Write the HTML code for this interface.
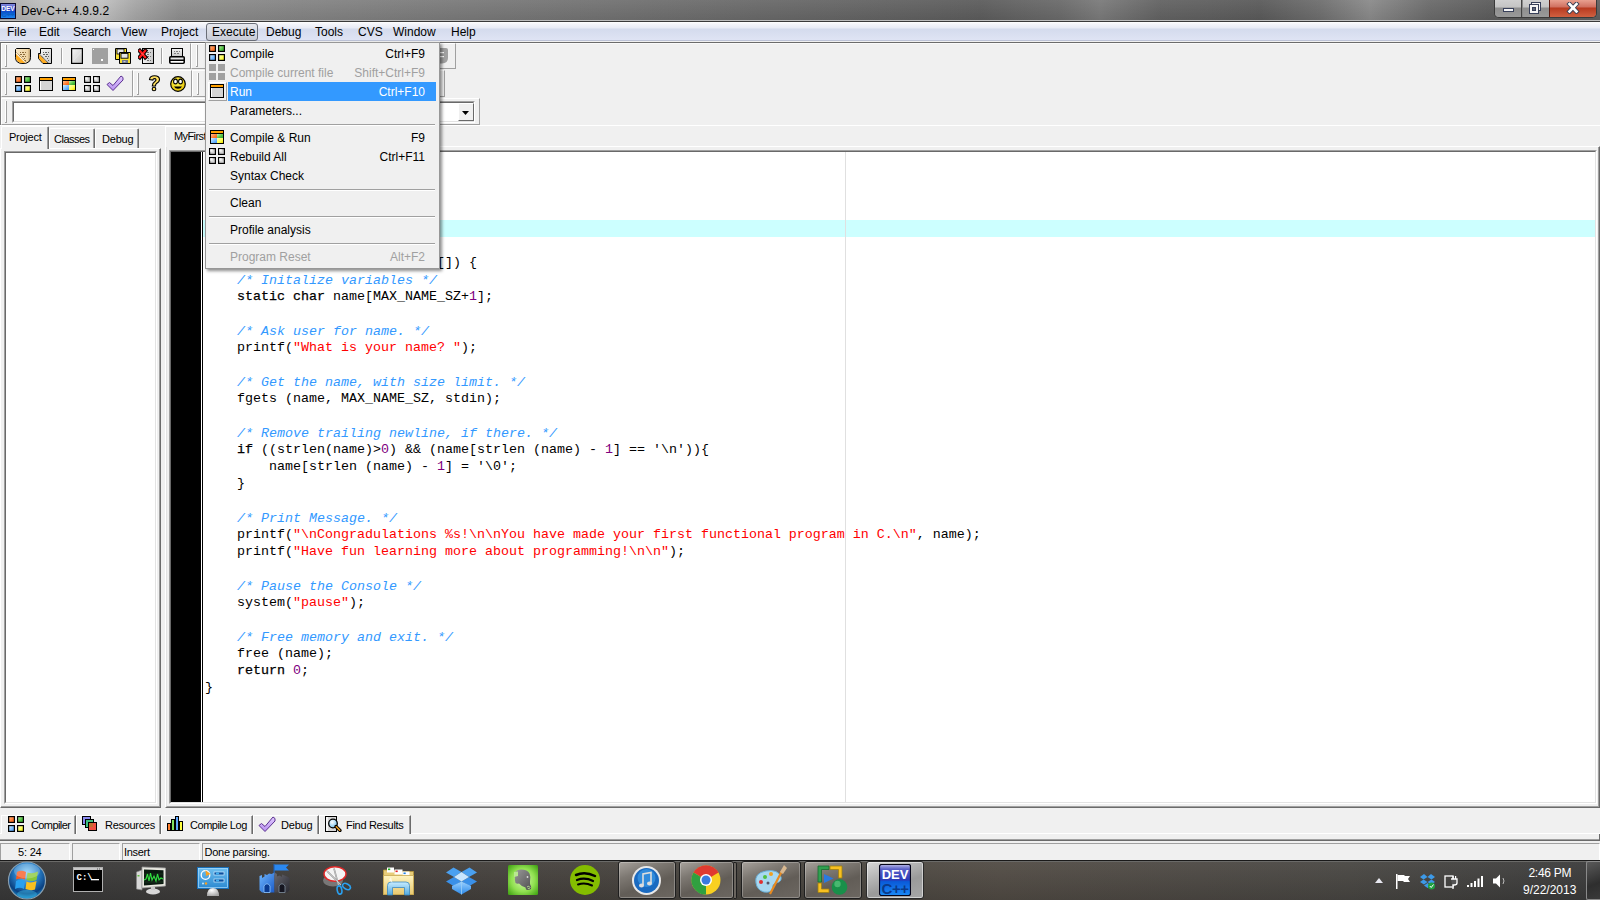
<!DOCTYPE html><html><head><meta charset="utf-8"><style>
*{margin:0;padding:0;box-sizing:border-box}
html,body{width:1600px;height:900px;overflow:hidden;background:#f0f0f0}
body{position:relative;font-family:"Liberation Sans",sans-serif;font-size:12px;color:#000}
div,span,svg{position:absolute}
.t{white-space:pre;line-height:14px}
.code{font-family:"Liberation Mono",monospace;font-size:13.33px;line-height:17px;white-space:pre}
.cm{color:#3399ff;font-style:italic}
.st{color:#ff0000}
.nm{color:#800080}
.kw{-webkit-text-stroke:0.25px #000}
</style></head><body>
<svg width="0" height="0" style="position:absolute"><defs><linearGradient id="gO" x1="0" y1="0" x2="1" y2="1"><stop offset="0" stop-color="#ffc090"/><stop offset="0.6" stop-color="#ff7a30"/><stop offset="1" stop-color="#f06010"/></linearGradient><linearGradient id="gG" x1="0" y1="0" x2="1" y2="1"><stop offset="0" stop-color="#c0f8b0"/><stop offset="0.6" stop-color="#50c040"/><stop offset="1" stop-color="#30a030"/></linearGradient><linearGradient id="gB" x1="0" y1="0" x2="1" y2="1"><stop offset="0" stop-color="#d8f0ff"/><stop offset="0.6" stop-color="#70b8ff"/><stop offset="1" stop-color="#4090f0"/></linearGradient><linearGradient id="gY" x1="0" y1="0" x2="1" y2="1"><stop offset="0" stop-color="#ffffc0"/><stop offset="0.6" stop-color="#ffff50"/><stop offset="1" stop-color="#e8d800"/></linearGradient></defs></svg><div style="left:0px;top:0px;width:1600px;height:20px;background:linear-gradient(90deg,#a8a8a8 0px,#bcbcbc 40px,#c2c2c2 100px,#a6a6a6 135px,#8e8e8e 180px,#848484 300px,#7c7c7c 420px,#747474 560px,#6c6c6c 700px,#646464 850px,#5c5c5c 980px,#6a6a6a 1060px,#7a7a7a 1100px,#626262 1160px,#5a5a5a 1260px,#6e6e6e 1320px,#8a8a8a 1370px,#6a6a6a 1430px,#5c5c5c 1490px,#606060 1600px)"></div><div style="left:0px;top:0px;width:1600px;height:20px;background:linear-gradient(rgba(255,255,255,0.06),rgba(0,0,0,0.06))"></div><div style="left:0px;top:20px;width:1600px;height:1px;background:#bdbdbd"></div><div style="left:0px;top:21px;width:1600px;height:1px;background:#3a3a3a"></div><svg style="position:absolute;left:0px;top:3px;" width="16" height="16" viewBox="0 0 16 16"><defs><linearGradient id="ai" x1="0" y1="0" x2="0" y2="1"><stop offset="0" stop-color="#8a90e0"/><stop offset="0.45" stop-color="#2a40c0"/><stop offset="0.55" stop-color="#0a50d0"/><stop offset="1" stop-color="#1a88f0"/></linearGradient></defs><rect x="0.5" y="0.5" width="15" height="15" fill="url(#ai)" stroke="#0a0a30"/><text x="8" y="7.5" text-anchor="middle" font-family="Liberation Sans" font-weight="bold" font-size="6.5" fill="#fff">DEV</text><text x="8" y="14" text-anchor="middle" font-family="Liberation Sans" font-weight="bold" font-size="7" fill="#0a60c0">C++</text></svg><div class="t" style="left:21px;top:4px">Dev-C++ 4.9.9.2</div><div style="left:1494px;top:0px;width:103px;height:18px;border:1px solid #3a3a3a;border-top:none;border-radius:0 0 5px 5px;background:#888"></div><div style="left:1495px;top:0px;width:27px;height:17px;background:linear-gradient(#d0d0d0 0,#c4c4c4 7px,#8e8e8e 8px,#9a9a9a 17px);border-right:1px solid #444;border-radius:0 0 0 4px"></div><div style="left:1523px;top:0px;width:26px;height:17px;background:linear-gradient(#d0d0d0 0,#c4c4c4 7px,#8e8e8e 8px,#9a9a9a 17px)"></div><div style="left:1549px;top:0px;width:47px;height:17px;background:linear-gradient(#e8a090 0,#d07060 7px,#b83a20 8px,#d06040 17px);border-left:1px solid #5a1a10;border-radius:0 0 4px 0"></div><div style="left:1503px;top:8px;width:11px;height:4px;background:#f4f4f4;border:1px solid #38405a"></div><svg style="position:absolute;left:1528px;top:1px;" width="14" height="14" viewBox="0 0 14 14"><rect x="3.5" y="1.5" width="9" height="8" fill="#f4f4f4" stroke="#38405a"/><rect x="1.5" y="3.5" width="9" height="9" fill="#f4f4f4" stroke="#38405a"/><rect x="4.5" y="6.5" width="3" height="3" fill="#606878" stroke="#38405a"/></svg><svg style="position:absolute;left:1566px;top:2px;" width="14" height="12" viewBox="0 0 14 12"><path d="M3.5 2 L10.5 9.5 M10.5 2 L3.5 9.5" stroke="#3a3f55" stroke-width="4.4" stroke-linecap="square"/><path d="M3.5 2 L10.5 9.5 M10.5 2 L3.5 9.5" stroke="#fff" stroke-width="2.6" stroke-linecap="square"/></svg><div style="left:0px;top:22px;width:1600px;height:19px;background:linear-gradient(#ffffff 0,#f4f5fa 2px,#e8ebf5 6px,#d4dbed 7px,#dfe4f4 18px)"></div><div style="left:0px;top:40px;width:1600px;height:1px;background:#bcc2d6"></div><div style="left:0px;top:41px;width:1600px;height:1px;background:#f0f0f0"></div><div style="left:0px;top:42px;width:1600px;height:1px;background:#6b6b6b"></div><div style="left:0px;top:43px;width:1600px;height:1px;background:#fafafa"></div><div style="left:206px;top:23px;width:52px;height:18px;border:1px solid #6a6e78;border-radius:3px;background:linear-gradient(#e6e8ee,#c8ccd8)"></div><div class="t" style="left:7px;top:25px">File</div><div class="t" style="left:39px;top:25px">Edit</div><div class="t" style="left:73px;top:25px">Search</div><div class="t" style="left:121px;top:25px">View</div><div class="t" style="left:161px;top:25px">Project</div><div class="t" style="left:212px;top:25px">Execute</div><div class="t" style="left:266px;top:25px">Debug</div><div class="t" style="left:315px;top:25px">Tools</div><div class="t" style="left:358px;top:25px">CVS</div><div class="t" style="left:393px;top:25px">Window</div><div class="t" style="left:451px;top:25px">Help</div><div style="left:0px;top:43px;width:1px;height:82px;background:#7a7a7a"></div><div style="left:1px;top:43px;width:190px;height:26px;border-top:1px solid #fff;border-left:1px solid #fff;border-right:1px solid #a0a0a0;border-bottom:1px solid #a0a0a0"></div><div style="left:191px;top:43px;width:265px;height:26px;border-top:1px solid #fff;border-left:1px solid #fff;border-right:1px solid #a0a0a0;border-bottom:1px solid #a0a0a0"></div><div style="left:1px;top:70px;width:132px;height:27px;border-top:1px solid #fff;border-left:1px solid #fff;border-right:1px solid #a0a0a0;border-bottom:1px solid #a0a0a0"></div><div style="left:133px;top:70px;width:59px;height:27px;border-top:1px solid #fff;border-left:1px solid #fff;border-right:1px solid #a0a0a0;border-bottom:1px solid #a0a0a0"></div><div style="left:192px;top:70px;width:253px;height:27px;border-top:1px solid #fff;border-left:1px solid #fff;border-right:1px solid #a0a0a0;border-bottom:1px solid #a0a0a0"></div><div style="left:1px;top:98px;width:479px;height:27px;border-top:1px solid #fff;border-left:1px solid #fff;border-right:1px solid #a0a0a0;border-bottom:1px solid #a0a0a0"></div><div style="left:0px;top:125px;width:1600px;height:1px;background:#fff"></div><div style="left:5px;top:45px;width:1px;height:22px;background:#ffffff"></div><div style="left:6px;top:45px;width:1px;height:22px;background:#a0a0a0"></div><div style="left:5px;top:66px;width:2px;height:1px;background:#a0a0a0"></div><div style="left:196px;top:45px;width:1px;height:22px;background:#ffffff"></div><div style="left:197px;top:45px;width:1px;height:22px;background:#a0a0a0"></div><div style="left:196px;top:66px;width:2px;height:1px;background:#a0a0a0"></div><div style="left:5px;top:73px;width:1px;height:22px;background:#ffffff"></div><div style="left:6px;top:73px;width:1px;height:22px;background:#a0a0a0"></div><div style="left:5px;top:94px;width:2px;height:1px;background:#a0a0a0"></div><div style="left:137px;top:73px;width:1px;height:22px;background:#ffffff"></div><div style="left:138px;top:73px;width:1px;height:22px;background:#a0a0a0"></div><div style="left:137px;top:94px;width:2px;height:1px;background:#a0a0a0"></div><div style="left:197px;top:73px;width:1px;height:22px;background:#ffffff"></div><div style="left:198px;top:73px;width:1px;height:22px;background:#a0a0a0"></div><div style="left:197px;top:94px;width:2px;height:1px;background:#a0a0a0"></div><div style="left:5px;top:101px;width:1px;height:22px;background:#ffffff"></div><div style="left:6px;top:101px;width:1px;height:22px;background:#a0a0a0"></div><div style="left:5px;top:122px;width:2px;height:1px;background:#a0a0a0"></div><svg style="position:absolute;left:436px;top:48px;" width="13" height="16" viewBox="0 0 13 16"><path d="M0 0 H10 Q12 0 12 2 V10 Q12 15 6 15.5 H0Z" fill="#a0a0a0"/><rect x="3" y="4" width="5" height="1.2" fill="#fff"/><rect x="3" y="8" width="5" height="1.2" fill="#fff"/></svg><div style="left:61px;top:48px;width:1px;height:16px;background:#a0a0a0"></div><div style="left:62px;top:48px;width:1px;height:16px;background:#ffffff"></div><div style="left:161px;top:48px;width:1px;height:16px;background:#a0a0a0"></div><div style="left:162px;top:48px;width:1px;height:16px;background:#ffffff"></div><svg style="position:absolute;left:15px;top:48px;" width="16" height="16" viewBox="0 0 16 16"><defs><linearGradient id="np" x1="0" y1="0" x2="1" y2="0"><stop offset="0" stop-color="#f8e8c8"/><stop offset="0.8" stop-color="#eed4a4"/><stop offset="1" stop-color="#b09060"/></linearGradient></defs><path d="M1.5 0.5 H14.5 L15.5 1.5 V9.5 Q15.5 15.5 8 15.5 Q0.5 15.5 0.5 9.5 V1.5Z" fill="url(#np)" stroke="#000"/><path d="M1 6 L10.5 15 H8 Q2 15 1 10Z" fill="#ffac20"/><path d="M1 5.2 L10.6 14.8" stroke="#fff" stroke-width="0.8"/><path d="M1.5 4.6 L11.2 14.3" stroke="#7a5010" stroke-width="0.9" stroke-dasharray="1 0.8"/><g fill="#8a6a3a"><rect x="5" y="4" width="1" height="1"/><rect x="7" y="4" width="2" height="1"/><rect x="10" y="4" width="1" height="1"/><rect x="5" y="6" width="2" height="1"/><rect x="8" y="6" width="2" height="1"/><rect x="7" y="8" width="2" height="1"/><rect x="10" y="8" width="1" height="1"/><rect x="9" y="10" width="1" height="1"/><rect x="10" y="12" width="1" height="1"/></g></svg><svg style="position:absolute;left:38px;top:48px;" width="14" height="16" viewBox="0 0 14 16"><defs><linearGradient id="op" x1="0" y1="0" x2="1" y2="1"><stop offset="0" stop-color="#fafafa"/><stop offset="1" stop-color="#c8c8c8"/></linearGradient></defs><path d="M2.5 0.5 H13.5 V15.5 H5 L0.5 10.5 V5.5 H2.5 Z" fill="url(#op)" stroke="#000"/><path d="M0.8 6 L9.5 15 H5 L1 10.8Z" fill="#ffac20"/><path d="M1 5.6 L10 14.8" stroke="#000" stroke-width="1" stroke-dasharray="1 0.7"/><g fill="#606060"><rect x="5" y="4" width="1" height="1"/><rect x="7" y="4" width="2" height="1"/><rect x="10" y="4" width="1" height="1"/><rect x="5" y="6" width="2" height="1"/><rect x="8" y="6" width="2" height="1"/><rect x="7" y="8" width="2" height="1"/><rect x="10" y="8" width="1" height="1"/><rect x="9" y="10" width="1" height="1"/><rect x="10" y="12" width="1" height="1"/></g></svg><svg style="position:absolute;left:71px;top:48px;" width="12" height="16" viewBox="0 0 12 16"><defs><linearGradient id="nf" x1="0" y1="0" x2="1" y2="1"><stop offset="0" stop-color="#f8f8f8"/><stop offset="1" stop-color="#c4c4c4"/></linearGradient></defs><rect x="0.6" y="0.6" width="10.8" height="14.8" fill="url(#nf)" stroke="#000" stroke-width="1.2"/><path d="M2 13 L10 4" stroke="#e8e8e8" stroke-width="0.8"/></svg><div style="left:92px;top:48px;width:16px;height:16px;background:#a0a0a0"></div><div style="left:93px;top:49px;width:1px;height:1px;background:#fff"></div><div style="left:101px;top:59px;width:2px;height:2px;background:#fff"></div><svg style="position:absolute;left:115px;top:48px;" width="16" height="16" viewBox="0 0 16 16"><path d="M0.5 0.5 H11.5 V11.5 H0.5Z" fill="#f8e030" stroke="#000"/><rect x="2" y="1" width="7" height="5" fill="#e8e8e8" stroke="#000" stroke-width="0.8"/><rect x="10" y="1.5" width="1" height="1" fill="#ffe800"/><path d="M4.5 4.5 H15.5 V15.5 H4.5Z" fill="#f8e030" stroke="#000"/><rect x="6" y="5.4" width="7" height="4.8" fill="#e4e4e4" stroke="#000" stroke-width="0.9"/><rect x="14" y="5.5" width="1" height="1" fill="#ffe800"/><rect x="7" y="12" width="6" height="3" fill="#707890"/><rect x="8.5" y="13" width="2" height="1.2" fill="#ccc"/></svg><svg style="position:absolute;left:138px;top:48px;" width="16" height="16" viewBox="0 0 16 16"><defs><linearGradient id="cp" x1="0" y1="0" x2="1" y2="0"><stop offset="0" stop-color="#f4f4f4"/><stop offset="1" stop-color="#c8c8c8"/></linearGradient></defs><rect x="4.5" y="0.5" width="11" height="15" fill="url(#cp)" stroke="#000"/><g fill="#707070"><rect x="9" y="4" width="2" height="1"/><rect x="12" y="4" width="1" height="1"/><rect x="9" y="6" width="2" height="1"/><rect x="9" y="8" width="2" height="1"/><rect x="12" y="8" width="1" height="1"/><rect x="10" y="10" width="1" height="1"/><rect x="9" y="12" width="2" height="1"/><rect x="12" y="12" width="1" height="1"/></g><path d="M1.8 2.8 L7.2 9.2 M7.2 2.8 L1.8 9.2" stroke="#000" stroke-width="4.2" stroke-linecap="square"/><path d="M1.8 2.8 L7.2 9.2 M7.2 2.8 L1.8 9.2" stroke="#ff1a1a" stroke-width="2.2" stroke-linecap="square"/><path d="M3.5 5 L5.5 7" stroke="#ff9090" stroke-width="0.8"/></svg><svg style="position:absolute;left:169px;top:48px;" width="16" height="16" viewBox="0 0 16 16"><defs><linearGradient id="pr" x1="0" y1="0" x2="0" y2="1"><stop offset="0" stop-color="#f4f4f4"/><stop offset="1" stop-color="#c8c8c8"/></linearGradient></defs><rect x="2.5" y="0.5" width="11" height="8" fill="url(#pr)" stroke="#000"/><g fill="#808080"><rect x="5" y="3" width="1" height="1"/><rect x="7" y="3" width="2" height="1"/><rect x="10" y="3" width="1" height="1"/><rect x="5" y="5" width="2" height="1"/><rect x="8" y="5" width="2" height="1"/></g><rect x="0.75" y="8.75" width="14.5" height="6.5" rx="1" fill="#e4e4e4" stroke="#000" stroke-width="1.5"/><rect x="1" y="11.5" width="14" height="1.5" fill="#000"/><rect x="2" y="13" width="12" height="1.5" fill="#fff"/></svg><svg style="position:absolute;left:15px;top:76px" width="16" height="16"><rect x="0.6" y="0.6" width="5.8" height="5.8" fill="url(#gO)" stroke="#000" stroke-width="1.2"/><rect x="9.6" y="0.6" width="5.8" height="5.8" fill="url(#gG)" stroke="#000" stroke-width="1.2"/><rect x="0.6" y="9.6" width="5.8" height="5.8" fill="url(#gB)" stroke="#000" stroke-width="1.2"/><rect x="9.6" y="9.6" width="5.8" height="5.8" fill="url(#gY)" stroke="#000" stroke-width="1.2"/></svg><svg style="position:absolute;left:39px;top:77px" width="14" height="14"><rect x="0.5" y="0.5" width="13" height="13" fill="#d8d8d8" stroke="#000"/><rect x="1" y="1" width="12" height="2" fill="#ffa000"/><rect x="1" y="3" width="12" height="1" fill="#000"/><rect x="1" y="4" width="12" height="9" fill="#d4d4d4"/><rect x="1" y="4" width="1" height="9" fill="#fff"/></svg><svg style="position:absolute;left:62px;top:77px" width="14" height="14"><rect x="0.5" y="0.5" width="13" height="13" fill="#d8d8d8" stroke="#000"/><rect x="1" y="1" width="12" height="2" fill="#ffa000"/><rect x="1" y="3" width="12" height="1" fill="#000"/><rect x="1" y="4" width="6" height="4" fill="url(#gO)"/><rect x="7" y="4" width="6" height="4" fill="url(#gG)"/><rect x="1" y="8" width="6" height="5" fill="url(#gB)"/><rect x="7" y="8" width="6" height="5" fill="url(#gY)"/></svg><svg style="position:absolute;left:84px;top:76px" width="16" height="16"><rect x="0.6" y="0.6" width="5.8" height="5.8" fill="#d4d4d4" stroke="#000" stroke-width="1.2"/><rect x="1.2" y="1.2" width="2.5" height="2.5" fill="#f4f4f4"/><rect x="9.6" y="0.6" width="5.8" height="5.8" fill="#d4d4d4" stroke="#000" stroke-width="1.2"/><rect x="10.2" y="1.2" width="2.5" height="2.5" fill="#f4f4f4"/><rect x="0.6" y="9.6" width="5.8" height="5.8" fill="#d4d4d4" stroke="#000" stroke-width="1.2"/><rect x="1.2" y="10.2" width="2.5" height="2.5" fill="#f4f4f4"/><rect x="9.6" y="9.6" width="5.8" height="5.8" fill="#d4d4d4" stroke="#000" stroke-width="1.2"/><rect x="10.2" y="10.2" width="2.5" height="2.5" fill="#f4f4f4"/></svg><svg style="position:absolute;left:106px;top:75px" width="18" height="17" viewBox="0 0 18 17"><defs><linearGradient id="ck" x1="0" y1="0" x2="0" y2="1"><stop offset="0" stop-color="#e0c8ff"/><stop offset="1" stop-color="#b890f0"/></linearGradient></defs><path d="M1 9.5 L3.5 7.5 L7 10.5 L15 1 L17 2.5 V5 L7 15.5 Z" fill="url(#ck)" stroke="#5a3090" stroke-width="1" stroke-linejoin="round"/></svg><svg style="position:absolute;left:148px;top:75px;" width="13" height="17" viewBox="0 0 13 17"><path d="M1.5 4.5 Q2 0.8 6.5 0.8 Q11.5 0.8 11.5 4.5 Q11.5 7 8.5 8.5 Q7.5 9.2 7.5 11 H4.3 Q4.3 8 6.8 6.5 Q8.2 5.6 8 4.5 Q7.8 3.6 6.5 3.6 Q5 3.6 4.8 5 Z" fill="#ffe060" stroke="#000" stroke-width="1.1"/><circle cx="6" cy="14" r="1.8" fill="#ffe060" stroke="#000" stroke-width="1.1"/></svg><svg style="position:absolute;left:170px;top:76px;" width="16" height="16" viewBox="0 0 16 16"><defs><radialGradient id="sm" cx="45%" cy="40%" r="60%"><stop offset="0" stop-color="#ffff60"/><stop offset="1" stop-color="#e8c000"/></radialGradient></defs><circle cx="8" cy="8" r="7.3" fill="url(#sm)" stroke="#000" stroke-width="1.2"/><ellipse cx="5.5" cy="5.5" rx="1.9" ry="2.4" fill="#fff" stroke="#000" stroke-width="1.1"/><ellipse cx="10.5" cy="5.5" rx="1.9" ry="2.4" fill="#fff" stroke="#000" stroke-width="1.1"/><path d="M4 10.5 H12 Q11 12.8 8 12.8 Q5 12.8 4 10.5Z" fill="#000"/></svg><div style="left:12px;top:101px;width:463px;height:22px;background:#fff;border-top:1px solid #a0a0a0;border-left:1px solid #a0a0a0;border-right:1px solid #fff;border-bottom:1px solid #fff"></div><div style="left:13px;top:102px;width:461px;height:20px;border-top:1px solid #696969;border-left:1px solid #696969;border-right:1px solid #e3e3e3;border-bottom:1px solid #e3e3e3"></div><div style="left:458px;top:103px;width:16px;height:18px;background:#f0f0f0;border-top:1px solid #fff;border-left:1px solid #fff;border-right:1px solid #696969;border-bottom:1px solid #696969"></div><svg style="position:absolute;left:462px;top:110.5px;" width="7" height="4" viewBox="0 0 7 4"><path d="M0 0 H7 L3.5 4Z" fill="#000"/></svg><div style="left:0px;top:126px;width:1px;height:682px;background:#f0f0f0"></div><div style="left:0px;top:148px;width:161px;height:660px;border-top:1px solid #fff;border-left:1px solid #fff;border-right:1px solid #6b6b6b;border-bottom:1px solid #6b6b6b"></div><div style="left:1px;top:149px;width:159px;height:658px;border-right:1px solid #a0a0a0;border-bottom:1px solid #a0a0a0"></div><div style="left:4px;top:151px;width:153px;height:653px;background:#fff;border-top:1px solid #a0a0a0;border-left:1px solid #a0a0a0;border-right:1px solid #fff;border-bottom:1px solid #fff"></div><div style="left:5px;top:152px;width:151px;height:651px;border-top:1px solid #696969;border-left:1px solid #696969;border-right:1px solid #e3e3e3;border-bottom:1px solid #e3e3e3"></div><div style="left:49px;top:128px;width:46px;height:20px;background:#f0f0f0;border-top:1px solid #fff;border-left:1px solid #fff;border-right:1px solid #6b6b6b;border-radius:2px 2px 0 0"></div><div style="left:93px;top:129px;width:1px;height:19px;background:#a0a0a0"></div><div style="left:95px;top:128px;width:44px;height:20px;background:#f0f0f0;border-top:1px solid #fff;border-left:1px solid #fff;border-right:1px solid #6b6b6b;border-radius:2px 2px 0 0"></div><div style="left:137px;top:129px;width:1px;height:19px;background:#a0a0a0"></div><div style="left:1px;top:126px;width:48px;height:23px;background:#f0f0f0;border-top:1px solid #fff;border-left:1px solid #fff;border-right:1px solid #6b6b6b;border-radius:2px 2px 0 0"></div><div style="left:47px;top:127px;width:1px;height:22px;background:#a0a0a0"></div><div class="t" style="left:9px;top:130px;font-size:11px;letter-spacing:-0.25px">Project</div><div class="t" style="left:54px;top:132px;font-size:11px;letter-spacing:-0.5px">Classes</div><div class="t" style="left:102px;top:132px;font-size:11px;letter-spacing:-0.2px">Debug</div><div style="left:165px;top:146px;width:1435px;height:662px;border-top:1px solid #fff;border-left:1px solid #fff;border-right:1px solid #6b6b6b;border-bottom:1px solid #6b6b6b"></div><div style="left:166px;top:147px;width:1433px;height:660px;border-left:1px solid #e3e3e3;border-right:1px solid #a0a0a0;border-bottom:1px solid #a0a0a0"></div><div style="left:165px;top:126px;width:80px;height:21px;background:#f0f0f0;border-top:1px solid #fff;border-left:1px solid #fff;border-right:1px solid #6b6b6b"></div><div class="t" style="left:174px;top:129px;font-size:11px;letter-spacing:-0.6px">MyFirstProgram.c</div><div style="left:169px;top:150px;width:1428px;height:654px;background:#fff;border-top:1px solid #a0a0a0;border-left:1px solid #a0a0a0;border-right:1px solid #fff;border-bottom:1px solid #fff"></div><div style="left:170px;top:151px;width:1426px;height:652px;border-top:1px solid #696969;border-left:1px solid #696969;border-right:1px solid #e3e3e3;border-bottom:1px solid #e3e3e3"></div><div style="left:171px;top:152px;width:30px;height:650px;background:#000"></div><div style="left:202px;top:152px;width:1px;height:650px;background:#000"></div><div style="left:203px;top:220px;width:1392px;height:17px;background:#ccffff"></div><div style="left:845px;top:152px;width:1px;height:650px;background:#e0e0e0"></div><div class="code" style="left:205px;top:254px">int main(int argc, char *argv[]) {</div><div class="code" style="left:205px;top:272px">    <span class="cm" style="position:static">/* Initalize variables */</span></div><div class="code" style="left:205px;top:288px">    <span class="kw" style="position:static">static</span> <span class="kw" style="position:static">char</span> name[MAX_NAME_SZ+<span class="nm" style="position:static">1</span>];</div><div class="code" style="left:205px;top:323px">    <span class="cm" style="position:static">/* Ask user for name. */</span></div><div class="code" style="left:205px;top:339px">    printf(<span class="st" style="position:static">"What is your name? "</span>);</div><div class="code" style="left:205px;top:374px">    <span class="cm" style="position:static">/* Get the name, with size limit. */</span></div><div class="code" style="left:205px;top:390px">    fgets (name, MAX_NAME_SZ, stdin);</div><div class="code" style="left:205px;top:425px">    <span class="cm" style="position:static">/* Remove trailing newline, if there. */</span></div><div class="code" style="left:205px;top:441px">    <span class="kw" style="position:static">if</span> ((strlen(name)&gt;<span class="nm" style="position:static">0</span>) &amp;&amp; (name[strlen (name) - <span class="nm" style="position:static">1</span>] == '\n')){</div><div class="code" style="left:205px;top:458px">        name[strlen (name) - <span class="nm" style="position:static">1</span>] = '\0';</div><div class="code" style="left:205px;top:475px">    }</div><div class="code" style="left:205px;top:510px">    <span class="cm" style="position:static">/* Print Message. */</span></div><div class="code" style="left:205px;top:526px">    printf(<span class="st" style="position:static">"\nCongradulations %s!\n\nYou have made your first functional program in C.\n"</span>, name);</div><div class="code" style="left:205px;top:543px">    printf(<span class="st" style="position:static">"Have fun learning more about programming!\n\n"</span>);</div><div class="code" style="left:205px;top:578px">    <span class="cm" style="position:static">/* Pause the Console */</span></div><div class="code" style="left:205px;top:594px">    system(<span class="st" style="position:static">"pause"</span>);</div><div class="code" style="left:205px;top:629px">    <span class="cm" style="position:static">/* Free memory and exit. */</span></div><div class="code" style="left:205px;top:645px">    free (name);</div><div class="code" style="left:205px;top:662px">    <span class="kw" style="position:static">return</span> <span class="nm" style="position:static">0</span>;</div><div class="code" style="left:205px;top:679px">}</div><div style="left:0px;top:833px;width:1600px;height:1px;background:#fff"></div><div style="left:0px;top:834px;width:1600px;height:5px;background:#f0f0f0"></div><div style="left:0px;top:839px;width:1600px;height:1px;background:#a0a0a0"></div><div style="left:0px;top:840px;width:1600px;height:1px;background:#6b6b6b"></div><div style="left:1px;top:815px;width:75px;height:19px;background:#f0f0f0;border-top:1px solid #fff;border-left:1px solid #fff;border-right:1px solid #6b6b6b"></div><div style="left:74px;top:816px;width:1px;height:18px;background:#a0a0a0"></div><div style="left:76px;top:815px;width:85px;height:19px;background:#f0f0f0;border-top:1px solid #fff;border-left:1px solid #fff;border-right:1px solid #6b6b6b"></div><div style="left:159px;top:816px;width:1px;height:18px;background:#a0a0a0"></div><div style="left:161px;top:815px;width:92px;height:19px;background:#f0f0f0;border-top:1px solid #fff;border-left:1px solid #fff;border-right:1px solid #6b6b6b"></div><div style="left:251px;top:816px;width:1px;height:18px;background:#a0a0a0"></div><div style="left:253px;top:815px;width:66px;height:19px;background:#f0f0f0;border-top:1px solid #fff;border-left:1px solid #fff;border-right:1px solid #6b6b6b"></div><div style="left:317px;top:816px;width:1px;height:18px;background:#a0a0a0"></div><div style="left:319px;top:815px;width:92px;height:19px;background:#f0f0f0;border-top:1px solid #fff;border-left:1px solid #fff;border-right:1px solid #6b6b6b"></div><div style="left:409px;top:816px;width:1px;height:18px;background:#a0a0a0"></div><svg style="position:absolute;left:8px;top:816px" width="16" height="16"><rect x="0.6" y="0.6" width="5.8" height="5.8" fill="url(#gO)" stroke="#000" stroke-width="1.2"/><rect x="9.6" y="0.6" width="5.8" height="5.8" fill="url(#gG)" stroke="#000" stroke-width="1.2"/><rect x="0.6" y="9.6" width="5.8" height="5.8" fill="url(#gB)" stroke="#000" stroke-width="1.2"/><rect x="9.6" y="9.6" width="5.8" height="5.8" fill="url(#gY)" stroke="#000" stroke-width="1.2"/></svg><svg style="position:absolute;left:82px;top:816px;" width="16" height="16" viewBox="0 0 16 16"><rect x="0.5" y="0.5" width="8" height="8" fill="#8a8af0" stroke="#000"/><rect x="3.5" y="3.5" width="8" height="8" fill="#40c080" stroke="#000"/><rect x="6.5" y="6.5" width="8" height="8" fill="#f05040" stroke="#000"/><rect x="7" y="7" width="4" height="4" fill="#c07030"/></svg><svg style="position:absolute;left:167px;top:816px;" width="16" height="16" viewBox="0 0 16 16"><rect x="0.5" y="7.5" width="3" height="7" fill="#ff8030" stroke="#000"/><rect x="4.5" y="3.5" width="3" height="11" fill="#80e060" stroke="#000"/><rect x="8.5" y="0.5" width="3" height="14" fill="#60a8ff" stroke="#000"/><rect x="12.5" y="5.5" width="3" height="9" fill="#ffff40" stroke="#000"/></svg><svg style="position:absolute;left:258px;top:816px" width="18" height="17" viewBox="0 0 18 17"><defs><linearGradient id="ck" x1="0" y1="0" x2="0" y2="1"><stop offset="0" stop-color="#e0c8ff"/><stop offset="1" stop-color="#b890f0"/></linearGradient></defs><path d="M1 9.5 L3.5 7.5 L7 10.5 L15 1 L17 2.5 V5 L7 15.5 Z" fill="url(#ck)" stroke="#5a3090" stroke-width="1" stroke-linejoin="round"/></svg><svg style="position:absolute;left:325px;top:816px;" width="17" height="16" viewBox="0 0 17 16"><defs><radialGradient id="lens" cx="40%" cy="35%" r="60%"><stop offset="0" stop-color="#ffffff"/><stop offset="1" stop-color="#80c8f0"/></radialGradient></defs><rect x="0.5" y="0.5" width="11" height="15" fill="#d8d8d8" stroke="#000"/><rect x="1" y="1" width="2" height="14" fill="#f4f4f4"/><circle cx="8" cy="7.5" r="4.3" fill="url(#lens)" stroke="#000" stroke-width="1.3"/><path d="M11 10.5 L15 14.5" stroke="#000" stroke-width="3.2" stroke-linecap="round"/><path d="M11.3 10.8 L14.7 14.2" stroke="#f0a020" stroke-width="1.6" stroke-linecap="round"/></svg><div class="t" style="left:31px;top:818px;font-size:11px;letter-spacing:-0.6px">Compiler</div><div class="t" style="left:105px;top:818px;font-size:11px;letter-spacing:-0.3px">Resources</div><div class="t" style="left:190px;top:818px;font-size:11px;letter-spacing:-0.45px">Compile Log</div><div class="t" style="left:281px;top:818px;font-size:11px;letter-spacing:-0.2px">Debug</div><div class="t" style="left:346px;top:818px;font-size:11px;letter-spacing:-0.3px">Find Results</div><div style="left:1599px;top:834px;width:1px;height:6px;background:#6b6b6b"></div><div style="left:0px;top:841px;width:1600px;height:19px;background:#f0f0f0"></div><div style="left:0px;top:843px;width:70px;height:17px;border-top:1px solid #a0a0a0;border-left:1px solid #a0a0a0;border-right:1px solid #fff"></div><div style="left:72px;top:843px;width:48px;height:17px;border-top:1px solid #a0a0a0;border-left:1px solid #a0a0a0;border-right:1px solid #fff"></div><div style="left:122px;top:843px;width:78px;height:17px;border-top:1px solid #a0a0a0;border-left:1px solid #a0a0a0;border-right:1px solid #fff"></div><div style="left:202px;top:843px;width:1398px;height:17px;border-top:1px solid #a0a0a0;border-left:1px solid #a0a0a0;border-right:1px solid #fff"></div><div class="t" style="left:18px;top:845px;font-size:11px;letter-spacing:-0.2px">5: 24</div><div class="t" style="left:124px;top:845px;font-size:11px;letter-spacing:-0.3px">Insert</div><div class="t" style="left:204.5px;top:845px;font-size:11px;letter-spacing:-0.25px">Done parsing.</div><div style="left:0px;top:860px;width:1600px;height:40px;background:linear-gradient(90deg,#3a3a3a 0,#403e3c 250px,#46423e 500px,#4a4640 800px,#534d46 1000px,#4e4a45 1200px,#4a4844 1350px,#3c3c3c 1600px)"></div><div style="left:0px;top:862px;width:1600px;height:38px;background:linear-gradient(rgba(255,255,255,0.04),rgba(0,0,0,0.12))"></div><div style="left:0px;top:860px;width:1600px;height:1px;background:#1a1a1a"></div><div style="left:0px;top:861px;width:1600px;height:1px;background:#6a6a68"></div><div style="left:205px;top:42px;width:235px;height:227px;background:#f0f0f0;border:1px solid #979797;box-shadow:2px 2px 3px rgba(0,0,0,0.45)"></div><svg style="position:absolute;left:209px;top:45px" width="16" height="16"><rect x="0.6" y="0.6" width="5.8" height="5.8" fill="url(#gO)" stroke="#000" stroke-width="1.2"/><rect x="9.6" y="0.6" width="5.8" height="5.8" fill="url(#gG)" stroke="#000" stroke-width="1.2"/><rect x="0.6" y="9.6" width="5.8" height="5.8" fill="url(#gB)" stroke="#000" stroke-width="1.2"/><rect x="9.6" y="9.6" width="5.8" height="5.8" fill="url(#gY)" stroke="#000" stroke-width="1.2"/></svg><div class="t" style="left:230px;top:46.5px;color:#000">Compile</div><div class="t" style="right:1175px;top:46.5px;color:#000">Ctrl+F9</div><svg style="position:absolute;left:209px;top:64px" width="16" height="16"><rect x="0" y="0" width="7" height="7" fill="#a0a0a0"/><rect x="9" y="0" width="7" height="7" fill="#a0a0a0"/><rect x="0" y="9" width="7" height="7" fill="#a0a0a0"/><rect x="9" y="9" width="7" height="7" fill="#a0a0a0"/></svg><div class="t" style="left:230px;top:65.5px;color:#a0a0a0">Compile current file</div><div class="t" style="right:1175px;top:65.5px;color:#a0a0a0">Shift+Ctrl+F9</div><div style="left:228px;top:82px;width:208px;height:19px;background:#3399ff"></div><div style="left:208px;top:82px;width:19px;height:19px;border-top:1px solid #fff;border-left:1px solid #fff;border-right:1px solid #a0a0a0;border-bottom:1px solid #a0a0a0"></div><svg style="position:absolute;left:210px;top:84px" width="14" height="14"><rect x="0.5" y="0.5" width="13" height="13" fill="#d8d8d8" stroke="#000"/><rect x="1" y="1" width="12" height="2" fill="#ffa000"/><rect x="1" y="3" width="12" height="1" fill="#000"/><rect x="1" y="4" width="12" height="9" fill="#d4d4d4"/><rect x="1" y="4" width="1" height="9" fill="#fff"/></svg><div class="t" style="left:230px;top:84.5px;color:#fff">Run</div><div class="t" style="right:1175px;top:84.5px;color:#fff">Ctrl+F10</div><div class="t" style="left:230px;top:103.5px;color:#000">Parameters...</div><div style="left:209px;top:124px;width:226px;height:1px;background:#a0a0a0"></div><div style="left:209px;top:125px;width:226px;height:1px;background:#fff"></div><svg style="position:absolute;left:210px;top:130px" width="14" height="14"><rect x="0.5" y="0.5" width="13" height="13" fill="#d8d8d8" stroke="#000"/><rect x="1" y="1" width="12" height="2" fill="#ffa000"/><rect x="1" y="3" width="12" height="1" fill="#000"/><rect x="1" y="4" width="6" height="4" fill="url(#gO)"/><rect x="7" y="4" width="6" height="4" fill="url(#gG)"/><rect x="1" y="8" width="6" height="5" fill="url(#gB)"/><rect x="7" y="8" width="6" height="5" fill="url(#gY)"/></svg><div class="t" style="left:230px;top:130.5px;color:#000">Compile &amp; Run</div><div class="t" style="right:1175px;top:130.5px;color:#000">F9</div><svg style="position:absolute;left:209px;top:148px" width="16" height="16"><rect x="0.6" y="0.6" width="5.8" height="5.8" fill="#d4d4d4" stroke="#000" stroke-width="1.2"/><rect x="1.2" y="1.2" width="2.5" height="2.5" fill="#f4f4f4"/><rect x="9.6" y="0.6" width="5.8" height="5.8" fill="#d4d4d4" stroke="#000" stroke-width="1.2"/><rect x="10.2" y="1.2" width="2.5" height="2.5" fill="#f4f4f4"/><rect x="0.6" y="9.6" width="5.8" height="5.8" fill="#d4d4d4" stroke="#000" stroke-width="1.2"/><rect x="1.2" y="10.2" width="2.5" height="2.5" fill="#f4f4f4"/><rect x="9.6" y="9.6" width="5.8" height="5.8" fill="#d4d4d4" stroke="#000" stroke-width="1.2"/><rect x="10.2" y="10.2" width="2.5" height="2.5" fill="#f4f4f4"/></svg><div class="t" style="left:230px;top:149.5px;color:#000">Rebuild All</div><div class="t" style="right:1175px;top:149.5px;color:#000">Ctrl+F11</div><div class="t" style="left:230px;top:168.5px;color:#000">Syntax Check</div><div style="left:209px;top:189px;width:226px;height:1px;background:#a0a0a0"></div><div style="left:209px;top:190px;width:226px;height:1px;background:#fff"></div><div class="t" style="left:230px;top:195.5px;color:#000">Clean</div><div style="left:209px;top:216px;width:226px;height:1px;background:#a0a0a0"></div><div style="left:209px;top:217px;width:226px;height:1px;background:#fff"></div><div class="t" style="left:230px;top:222.5px;color:#000">Profile analysis</div><div style="left:209px;top:243px;width:226px;height:1px;background:#a0a0a0"></div><div style="left:209px;top:244px;width:226px;height:1px;background:#fff"></div><div class="t" style="left:230px;top:249.5px;color:#a0a0a0">Program Reset</div><div class="t" style="right:1175px;top:249.5px;color:#a0a0a0">Alt+F2</div><div style="left:618px;top:861px;width:58px;height:38px;border:1px solid #1e1e1e;border-radius:3px;background:linear-gradient(160deg,#a8a39d 0,#7e7973 30%,#625d57 60%,#6c6761 100%);box-shadow:inset 0 0 0 1px rgba(255,255,255,0.25)"></div><div style="left:679px;top:861px;width:55px;height:38px;border:1px solid #1e1e1e;border-radius:3px;background:linear-gradient(160deg,#a8a39d 0,#7e7973 30%,#625d57 60%,#6c6761 100%);box-shadow:inset 0 0 0 1px rgba(255,255,255,0.25)"></div><div style="left:734px;top:862px;width:3px;height:37px;border:1px solid #1e1e1e;border-left:none;background:#6a655f;border-radius:0 2px 2px 0"></div><div style="left:741px;top:861px;width:60px;height:38px;border:1px solid #1e1e1e;border-radius:3px;background:linear-gradient(160deg,#a8a39d 0,#7e7973 30%,#625d57 60%,#6c6761 100%);box-shadow:inset 0 0 0 1px rgba(255,255,255,0.25)"></div><div style="left:804px;top:861px;width:58px;height:38px;border:1px solid #1e1e1e;border-radius:3px;background:linear-gradient(160deg,#a8a39d 0,#7e7973 30%,#625d57 60%,#6c6761 100%);box-shadow:inset 0 0 0 1px rgba(255,255,255,0.25)"></div><div style="left:866px;top:861px;width:58px;height:38px;border:1px solid #2a2a2a;border-radius:3px;background:linear-gradient(160deg,#d8d8d8 0,#b8b8b8 30%,#9a9a9a 60%,#a8a8a8 100%);box-shadow:inset 0 0 0 1px rgba(255,255,255,0.5)"></div><svg style="position:absolute;left:7px;top:861px;" width="40" height="39" viewBox="0 0 40 39"><defs><radialGradient id="orb" cx="50%" cy="30%" r="70%"><stop offset="0" stop-color="#8ad0f8"/><stop offset="0.45" stop-color="#2a80c8"/><stop offset="0.8" stop-color="#0a4080"/><stop offset="1" stop-color="#1a90d0"/></radialGradient></defs><circle cx="20" cy="19.5" r="18.5" fill="url(#orb)" stroke="#8aa0b0" stroke-width="1.2"/><path d="M10 11 Q14 8.5 19 11 L18 18.5 Q14 16.5 9 18.5Z" fill="#f85a20"/><path d="M20.5 11.5 Q25 13.5 31 10.5 L29.5 19 Q25 21 19.5 19Z" fill="#88c838"/><path d="M9 20 Q13.5 17.5 18 20 L17 28 Q13 25.5 8 28Z" fill="#28a0f0"/><path d="M19.5 20.5 Q24 22.5 29.5 20 L28 28.5 Q23.5 30 18.5 28Z" fill="#f8c020"/><ellipse cx="20" cy="10" rx="13" ry="7.5" fill="rgba(255,255,255,0.22)"/><ellipse cx="20" cy="33" rx="10" ry="4" fill="rgba(80,220,255,0.35)"/></svg><svg style="position:absolute;left:73px;top:867px;" width="30" height="25" viewBox="0 0 30 25"><rect x="0.5" y="0.5" width="29" height="24" fill="#000" stroke="#b0b0b0"/><rect x="1" y="1" width="28" height="2" fill="#c8c8c8"/><rect x="24" y="1.5" width="1" height="1" fill="#555"/><rect x="26" y="1.5" width="1" height="1" fill="#555"/><text x="3.5" y="13" font-family="Liberation Mono" font-weight="bold" font-size="9" fill="#fff">C:\</text><rect x="18" y="12" width="8" height="1.3" fill="#fff"/></svg><svg style="position:absolute;left:136px;top:865px;" width="31" height="30" viewBox="0 0 31 30"><path d="M0.5 7 L6 5 V25 L0.5 24Z" fill="#d8d8d8" stroke="#888" stroke-width="0.7"/><rect x="1.5" y="10" width="2" height="1.5" fill="#60c040"/><path d="M6 2 L29.5 3 V21 L6 23Z" fill="#e8e8e0" stroke="#999" stroke-width="0.8"/><path d="M8 4.5 L27.5 5.3 V19 L8 20.5Z" fill="#0a1a10"/><g stroke="#2a4a2a" stroke-width="0.5"><path d="M8 9 H27.5 M8 13 H27.5 M8 17 H27.5"/></g><path d="M8 15 L10 14 L11.5 9 L13 16 L14.5 8 L16 15 L18 11 L20 16 L21.5 9 L23 15 L25 13 L27 14" stroke="#30e040" fill="none" stroke-width="1.1"/><ellipse cx="17" cy="26.5" rx="7" ry="3" fill="#d8d8d8"/><rect x="15" y="22" width="4" height="3" fill="#c8c8c8"/></svg><svg style="position:absolute;left:197px;top:867px;" width="33" height="29" viewBox="0 0 33 29"><defs><linearGradient id="cpg" x1="0" y1="0" x2="0" y2="1"><stop offset="0" stop-color="#70c0f0"/><stop offset="1" stop-color="#2a88d0"/></linearGradient><radialGradient id="cpm" cx="40%" cy="30%" r="70%"><stop offset="0" stop-color="#ffffff"/><stop offset="1" stop-color="#a8a8a8"/></radialGradient></defs><rect x="0.5" y="0.5" width="31" height="21" fill="url(#cpg)" stroke="#1a70b8"/><rect x="1.5" y="1.5" width="29" height="19" fill="none" stroke="#a8dcff" stroke-width="0.7"/><circle cx="8.5" cy="8" r="4.3" fill="none" stroke="#fff" stroke-width="1.3"/><path d="M8.5 3.2 L13.5 7 L9 9Z" fill="#f8a020"/><rect x="17" y="5" width="10" height="3" fill="#0a50a0" stroke="#d0ecff" stroke-width="0.7"/><rect x="17" y="12" width="10" height="3" fill="#0a50a0" stroke="#d0ecff" stroke-width="0.7"/><rect x="19" y="5.5" width="3" height="2" fill="#40b0f0"/><rect x="19" y="12.5" width="3" height="2" fill="#40b0f0"/><circle cx="6" cy="16.5" r="1" fill="#bfe8ff"/><circle cx="9" cy="16.5" r="1.2" fill="#f8a020"/><path d="M10 29 Q10 21 16 21 Q22 21 22 29Z" fill="url(#cpm)"/></svg><svg style="position:absolute;left:259px;top:864px;" width="31" height="29" viewBox="0 0 31 29"><defs><linearGradient id="cb" x1="0" y1="0" x2="1" y2="1"><stop offset="0" stop-color="#70b8ff"/><stop offset="1" stop-color="#1a5ac8"/></linearGradient><linearGradient id="cg" x1="0" y1="0" x2="1" y2="1"><stop offset="0" stop-color="#6a6a72"/><stop offset="1" stop-color="#2a2a32"/></linearGradient></defs><rect x="14.5" y="0" width="1.3" height="11" fill="#1a60c0"/><path d="M15.5 0.5 H30 L27 3.5 L30 6.5 H15.5Z" fill="#2a88f0"/><path d="M0.5 12 L3 11 V14 L5.5 12.5 V10 L8 11 L10 9.5 L12.5 10 L15.5 8.5 V28.5 H3 L0.5 26Z" fill="url(#cb)"/><path d="M15.5 8.5 L18 10 V12.5 L20.5 11.5 L23 13 V10.5 L25.5 11.5 L28 12.5 L30.5 14 V26 L28.5 28.5 H15.5Z" fill="url(#cg)"/><path d="M5 28.5 V22 Q8 17.5 11 22 V28.5Z" fill="#0a3a90" stroke="#90c8ff" stroke-width="0.8"/><path d="M20 28.5 V22 Q23 17.5 26 22 V28.5Z" fill="#151520" stroke="#8090a0" stroke-width="0.8"/></svg><svg style="position:absolute;left:322px;top:866px;" width="30" height="29" viewBox="0 0 30 29"><ellipse cx="11" cy="14.5" rx="10" ry="6" fill="#909090" opacity="0.7"/><ellipse cx="13" cy="8" rx="11" ry="7.3" fill="#f4f4f4" stroke="#e02828" stroke-width="1.4"/><path d="M5 5 L19 19 M12 2.5 L16.5 19" stroke="#909090" stroke-width="1.6"/><path d="M5 5 L19 19 M12 2.5 L16.5 19" stroke="#e0e0e0" stroke-width="0.6"/><ellipse cx="17.5" cy="24" rx="2.3" ry="4.2" transform="rotate(-10 17.5 24)" fill="none" stroke="#2aa0f0" stroke-width="1.6"/><ellipse cx="24.5" cy="20.5" rx="4.2" ry="2.6" transform="rotate(30 24.5 20.5)" fill="none" stroke="#2aa0f0" stroke-width="1.6"/></svg><svg style="position:absolute;left:382px;top:866px;" width="34" height="30" viewBox="0 0 34 30"><defs><linearGradient id="fd" x1="0" y1="0" x2="0" y2="1"><stop offset="0" stop-color="#fff4c0"/><stop offset="1" stop-color="#e8c870"/></linearGradient><linearGradient id="fdb" x1="0" y1="0" x2="0" y2="1"><stop offset="0" stop-color="#c8ecff"/><stop offset="1" stop-color="#50a8e0"/></linearGradient></defs><path d="M1.5 4 H12 L13.5 5.5 H31.5 V28.5 H1.5Z" fill="#e8cc78" stroke="#b8983a" stroke-width="0.8"/><rect x="5" y="1.5" width="7" height="5" fill="#fff"/><rect x="6" y="2.5" width="2.2" height="1.6" fill="#20b020"/><rect x="12.5" y="3.5" width="8" height="5" fill="#fff"/><rect x="13.5" y="4.5" width="2.2" height="1.6" fill="#e02020"/><rect x="20.5" y="5.5" width="7" height="5" fill="#fff"/><rect x="21.5" y="6.5" width="2.2" height="1.6" fill="#2080e0"/><path d="M1.5 9.5 H31.5 V28.5 H1.5Z" fill="url(#fd)" stroke="#c8a850" stroke-width="0.8"/><path d="M5.5 29 V19.5 Q5.5 16 9 16 H24 Q27.5 16 27.5 19.5 V29 H22.5 V21.5 H10.5 V29Z" fill="url(#fdb)" stroke="#3a88c0" stroke-width="0.8"/><path d="M9 11 L10.5 17 L7 14Z" fill="#fff" opacity="0.7"/></svg><svg style="position:absolute;left:445px;top:866px;" width="33" height="29" viewBox="0 0 33 29"><defs><linearGradient id="dbx" x1="0" y1="0" x2="0" y2="1"><stop offset="0" stop-color="#9ad0ff"/><stop offset="1" stop-color="#2a88e8"/></linearGradient></defs><path d="M1 6.5 L8.5 1.5 L16.5 6 L9 11Z" fill="#4aa0f0"/><path d="M16.5 6 L24.5 1.5 L32 6.5 L24 11Z" fill="#4aa0f0"/><path d="M1 15.5 L9 11 L16.5 15.5 L8.5 20Z" fill="#3a90e8"/><path d="M16.5 15.5 L24 11 L32 15.5 L24.5 20Z" fill="#3a90e8"/><path d="M9 11 L16.5 6 L24 11 L16.5 15.5Z" fill="#c8e6ff"/><path d="M7 20 L16.5 15.5 L26 20 V23 L16.5 28.5 L7 23Z" fill="url(#dbx)"/><path d="M16.5 15.5 V28.5" stroke="#9acff8" stroke-width="0.8"/></svg><svg style="position:absolute;left:508px;top:865px;" width="30" height="30" viewBox="0 0 30 30"><defs><radialGradient id="evg" cx="50%" cy="50%" r="65%"><stop offset="0" stop-color="#d8f8b0"/><stop offset="0.6" stop-color="#90e050"/><stop offset="1" stop-color="#48a818"/></radialGradient><linearGradient id="evl" x1="0" y1="0" x2="1" y2="1"><stop offset="0" stop-color="#9a9a9a"/><stop offset="1" stop-color="#505050"/></linearGradient></defs><rect x="0" y="0" width="30" height="30" rx="1.5" fill="url(#evg)"/><path d="M7 7.5 Q9 4.5 13 4.5 Q19.5 4.5 21.5 8.5 Q23 12 22 16.5 Q21.5 19.5 23 21.5 Q24 24.5 20.5 25 Q17.5 25.5 17.5 22.5 Q13.5 21.5 11 18.5 Q9 19 7.5 18 Q6.5 15 7 13 Q6 10 7 7.5Z" fill="url(#evl)"/><path d="M6 7 L10 6.5 L10 11 L6 12Z" fill="#b8e890"/><circle cx="19.5" cy="12" r="0.9" fill="#ddd"/><path d="M19 22 Q21 20 22 22.5 Q21.5 24.5 19.8 23.5" stroke="#c8f0a0" stroke-width="0.8" fill="none"/></svg><svg style="position:absolute;left:570px;top:865px;" width="30" height="30" viewBox="0 0 30 30"><circle cx="15" cy="15" r="15" fill="#84bd00"/><path d="M6 10 Q15 6 25 11" stroke="#000" stroke-width="2.5" fill="none" stroke-linecap="round"/><path d="M7 15 Q15 12 23 16" stroke="#000" stroke-width="2.2" fill="none" stroke-linecap="round"/><path d="M8 19.5 Q15 17 22 20.5" stroke="#000" stroke-width="2" fill="none" stroke-linecap="round"/></svg><svg style="position:absolute;left:631px;top:865px;" width="31" height="31" viewBox="0 0 31 31"><circle cx="15.5" cy="15.5" r="14.5" fill="#e8e8e8"/><circle cx="15.5" cy="15.5" r="12.5" fill="#1a6ac0"/><circle cx="15.5" cy="13" r="9" fill="#3a9ae8" opacity="0.7"/><path d="M12 20 V9 L20 7.5 V18" stroke="#ddd" stroke-width="1.6" fill="none"/><ellipse cx="10.5" cy="20.5" rx="2.5" ry="2" fill="#ddd"/><ellipse cx="18.5" cy="18.5" rx="2.5" ry="2" fill="#ddd"/></svg><svg style="position:absolute;left:691px;top:865px;" width="30" height="30" viewBox="0 0 30 30"><circle cx="15" cy="15" r="14.5" fill="#f8d020"/><path d="M15 15 L2.5 7.5 A14.5 14.5 0 0 1 27.5 7.5Z" fill="#e03a30"/><path d="M15 15 L2.5 7.5 A14.5 14.5 0 0 0 15 29.5Z" fill="#30a040"/><circle cx="15" cy="15" r="6" fill="#fff"/><circle cx="15" cy="15" r="4.5" fill="#3a7ae0"/></svg><svg style="position:absolute;left:754px;top:865px;" width="33" height="30" viewBox="0 0 33 30"><path d="M2 18 Q0 8 12 6 Q24 4 27 12 Q28 17 22 18 Q18 19 19 23 Q18 28 10 27 Q3 25 2 18Z" fill="#a8d8f0" stroke="#6ab0d8"/><circle cx="7" cy="17" r="2" fill="#e03030"/><circle cx="11" cy="12" r="2" fill="#50c040"/><circle cx="17" cy="9" r="2" fill="#f0a020"/><circle cx="14" cy="18" r="1.5" fill="#556"/><path d="M16 29 L28 6" stroke="#e88a20" stroke-width="2.2"/><path d="M26 7 L30 0 L33 3 L29 9Z" fill="#d8b890"/></svg><svg style="position:absolute;left:817px;top:865px;" width="33" height="31" viewBox="0 0 33 31"><path d="M1 17 V1 H12 V4.5 H4.5 V17Z" fill="#30a050" stroke="#1a6a30" stroke-width="0.8"/><path d="M13 1 H25 V13 H21.5 V4.5 H13Z" fill="#f8c020" stroke="#a08010" stroke-width="0.8"/><path d="M1 18 H4.5 V24 H12 V27.5 H1Z" fill="#f8c020" stroke="#a08010" stroke-width="0.8"/><path d="M7 9 L16.5 13.5 L7 18Z" fill="#2a7ae0"/><circle cx="22.5" cy="22" r="7.8" fill="#18904a"/><circle cx="20.5" cy="19" r="3.2" fill="#70d890" opacity="0.55"/></svg><svg style="position:absolute;left:879px;top:864px;" width="32" height="32" viewBox="0 0 32 32"><defs><linearGradient id="dv" x1="0" y1="0" x2="0" y2="1"><stop offset="0" stop-color="#b8b8e8"/><stop offset="0.15" stop-color="#5a60c8"/><stop offset="0.5" stop-color="#2a3ab8"/><stop offset="0.55" stop-color="#0a5ad8"/><stop offset="1" stop-color="#1a8af8"/></linearGradient></defs><rect x="0.5" y="0.5" width="31" height="31" rx="2" fill="url(#dv)" stroke="#05051a" stroke-width="1.2"/><text x="16" y="15" text-anchor="middle" font-family="Liberation Sans" font-weight="bold" font-size="13" fill="#fff">DEV</text><text x="16" y="29.5" text-anchor="middle" font-family="Liberation Sans" font-weight="bold" font-size="15" fill="#0a3a8a" letter-spacing="-0.5">C++</text></svg><svg style="position:absolute;left:1375px;top:878px;" width="8" height="5" viewBox="0 0 8 5"><path d="M0 5 L4 0 L8 5Z" fill="#e8e8f0"/></svg><svg style="position:absolute;left:1396px;top:874px;" width="15" height="15" viewBox="0 0 15 15"><rect x="0" y="0" width="1.5" height="15" fill="#fff"/><path d="M1.5 1 H8 L9 2 H14 L12 5 L14 8 H8 L7 7 H1.5Z" fill="#fff"/></svg><svg style="position:absolute;left:1419px;top:873px;" width="17" height="17" viewBox="0 0 17 17"><g fill="#3d9ae8"><path d="M1 4 L5 1 L8.5 4 L4.5 6.5Z"/><path d="M8.5 4 L12 1 L16 4 L12.5 6.5Z"/><path d="M1 9 L4.5 6.5 L8.5 9 L5 11.5Z"/><path d="M8.5 9 L12.5 6.5 L16 9 L12 11.5Z"/><path d="M5 12.5 L8.5 10 L12 12.5 L8.5 15Z"/></g><circle cx="12.5" cy="13" r="3.5" fill="#20a040"/><path d="M10.8 13 L12.2 14.5 L14.5 11.5" stroke="#fff" stroke-width="1" fill="none"/></svg><svg style="position:absolute;left:1444px;top:874px;" width="14" height="16" viewBox="0 0 14 16"><rect x="1" y="2" width="8" height="11" fill="none" stroke="#fff" stroke-width="1.3"/><path d="M7 5 H13 V9 Q13 11 10 11 H9 V15" stroke="#fff" stroke-width="1.3" fill="#555"/><rect x="8.5" y="2" width="1.2" height="3" fill="#fff"/><rect x="11" y="2" width="1.2" height="3" fill="#fff"/></svg><svg style="position:absolute;left:1467px;top:876px;" width="16" height="11" viewBox="0 0 16 11"><g fill="#fff"><rect x="0" y="9" width="2" height="2"/><rect x="3.5" y="7" width="2" height="4"/><rect x="7" y="5" width="2" height="6"/><rect x="10.5" y="2.5" width="2" height="8.5"/><rect x="14" y="0" width="2" height="11"/></g></svg><svg style="position:absolute;left:1493px;top:874px;" width="13" height="14" viewBox="0 0 13 14"><path d="M0 4.5 H3 L7 0.5 V13.5 L3 9.5 H0Z" fill="#fff"/><path d="M10 4 Q12 7 10 10" stroke="#bbb" stroke-width="1" fill="none"/></svg><div class="t" style="left:1528.5px;top:866px;color:#fff;font-size:12px;letter-spacing:-0.3px">2:46 PM</div><div class="t" style="left:1523px;top:883px;color:#fff;font-size:12px">9/22/2013</div><div style="left:1586px;top:861px;width:14px;height:39px;border:1px solid #8a8a8a;border-right:none;border-radius:2px 0 0 2px;background:linear-gradient(160deg,#5a5a5a,#2e2e2e 60%,#3a3a3a)"></div></body></html>
